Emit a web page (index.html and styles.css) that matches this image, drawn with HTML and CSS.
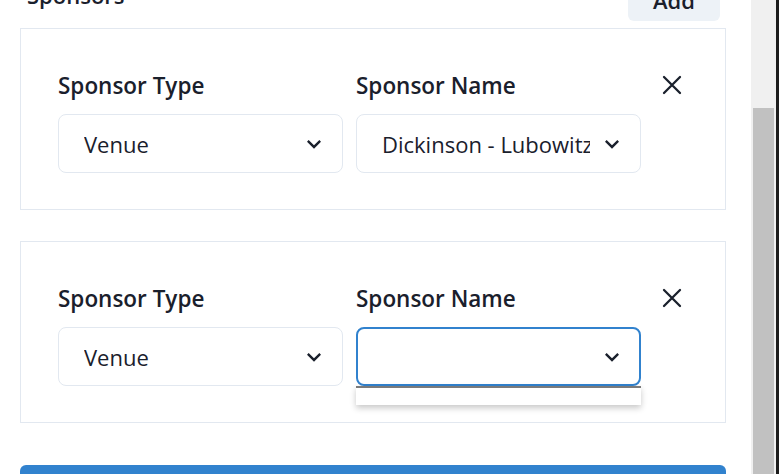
FILE: index.html
```html
<!DOCTYPE html>
<html>
<head>
<meta charset="utf-8">
<link rel="stylesheet" href="styles.css">
</head>
<body>
<div class="viewport">
  <main class="content">
    <div class="section-head">
      <h2 class="title">Sponsors</h2>
      <button class="add-btn">Add</button>
    </div>

    <div class="card">
      <div class="row">
        <div class="field">
          <label class="label">Sponsor Type</label>
          <div class="select">
            <span class="value">Venue</span>
            <svg class="chev" viewBox="0 0 24 24"><path d="M16.59 8.59L12 13.17 7.41 8.59 6 10l6 6 6-6z"/></svg>
          </div>
        </div>
        <div class="field">
          <label class="label">Sponsor Name</label>
          <div class="select">
            <span class="value">Dickinson - Lubowitz</span>
            <svg class="chev" viewBox="0 0 24 24"><path d="M16.59 8.59L12 13.17 7.41 8.59 6 10l6 6 6-6z"/></svg>
          </div>
        </div>
        <button class="close">
          <svg viewBox="0 0 20 20"><path d="M2 2L18 18M18 2L2 18"/></svg>
        </button>
      </div>
    </div>

    <div class="card">
      <div class="row">
        <div class="field">
          <label class="label">Sponsor Type</label>
          <div class="select">
            <span class="value">Venue</span>
            <svg class="chev" viewBox="0 0 24 24"><path d="M16.59 8.59L12 13.17 7.41 8.59 6 10l6 6 6-6z"/></svg>
          </div>
        </div>
        <div class="field">
          <label class="label">Sponsor Name</label>
          <div class="select focused">
            <span class="value"></span>
            <svg class="chev" viewBox="0 0 24 24"><path d="M16.59 8.59L12 13.17 7.41 8.59 6 10l6 6 6-6z"/></svg>
            <div class="popup"></div>
          </div>
        </div>
        <button class="close">
          <svg viewBox="0 0 20 20"><path d="M2 2L18 18M18 2L2 18"/></svg>
        </button>
      </div>
    </div>

    <button class="submit"></button>
  </main>
  <div class="scrollbar"><div class="thumb"></div></div>
  <div class="edge"></div>
</div>
</body>
</html>
```

FILE: styles.css
```css
* { box-sizing: border-box; }
html, body { margin: 0; padding: 0; }
body {
  font-family: "Open Sans", "Noto Sans", sans-serif;
  color: #1a202c;
  background: #fff;
  overflow: hidden;
}
.viewport {
  display: flex;
  width: 779px;
  height: 474px;
  overflow: hidden;
}
.content {
  width: 751px;
  flex: none;
  padding: 0 25px 0 20px;
  overflow: hidden;
}
.section-head {
  display: flex;
  align-items: center;
  justify-content: space-between;
  height: 42px;
  margin-top: -21px;
  margin-bottom: 7px;
  padding: 0 6px 0 7px;
}
.title {
  margin: 0;
  font-size: 22px;
  font-weight: 600;
  line-height: 30px;
  margin-top: -10px;
}
.add-btn {
  width: 92px;
  height: 42px;
  border: none;
  border-radius: 6px;
  background: #edf2f7;
  font-family: inherit;
  font-size: 22px;
  font-weight: 600;
  color: #1a202c;
}
.card {
  border: 1px solid #e2e8f0;
  padding: 42px 37px 36px;
  margin-bottom: 31px;
}
.card:last-of-type { margin-bottom: 0; }
.row {
  display: flex;
  align-items: flex-start;
  gap: 13px;
}
.field {
  width: 285px;
  flex: none;
  display: flex;
  flex-direction: column;
}
.label {
  font-size: 22.5px;
  font-weight: 600;
  line-height: 30px;
  margin-bottom: 13px;
}
.select {
  position: relative;
  height: 59px;
  border: 1px solid #e2e8f0;
  border-radius: 8px;
  display: flex;
  align-items: center;
  padding: 0 14px 0 25px;
  font-size: 22px;
}
.select.focused {
  border: 2px solid #3182ce;
  padding: 0 13px 0 24px;
}
.value {
  flex: 1;
  white-space: nowrap;
  overflow: hidden;
  min-width: 0;
  margin-right: 8px;
}
.chev {
  width: 28px;
  height: 28px;
  flex: none;
  fill: #1a202c;
}
.popup {
  position: absolute;
  left: -2px;
  top: 57px;
  width: 285px;
  height: 19px;
  background: #fff;
  border-top: 2px solid #7a7a7a;
  box-shadow: 0 3px 6px rgba(0,0,0,0.22);
}
.close {
  flex: none;
  margin-left: 3px;
  margin-top: -1px;
  width: 30px;
  height: 30px;
  padding: 0;
  border: none;
  background: transparent;
  display: flex;
  align-items: center;
  justify-content: center;
}
.close svg {
  width: 20px;
  height: 20px;
  fill: none;
  stroke: #1a202c;
  stroke-width: 2.3;
  stroke-linecap: round;
}
.submit {
  display: block;
  width: 706px;
  height: 48px;
  margin-top: 42px;
  border: none;
  border-radius: 6px;
  background: #3182ce;
}
.scrollbar {
  width: 25px;
  flex: none;
  background: #f0f0f0;
  padding: 108px 2px 0;
}
.thumb {
  height: 400px;
  background: #c1c1c1;
}
.edge {
  width: 3px;
  flex: none;
  background: #1c1c1c;
}
```
